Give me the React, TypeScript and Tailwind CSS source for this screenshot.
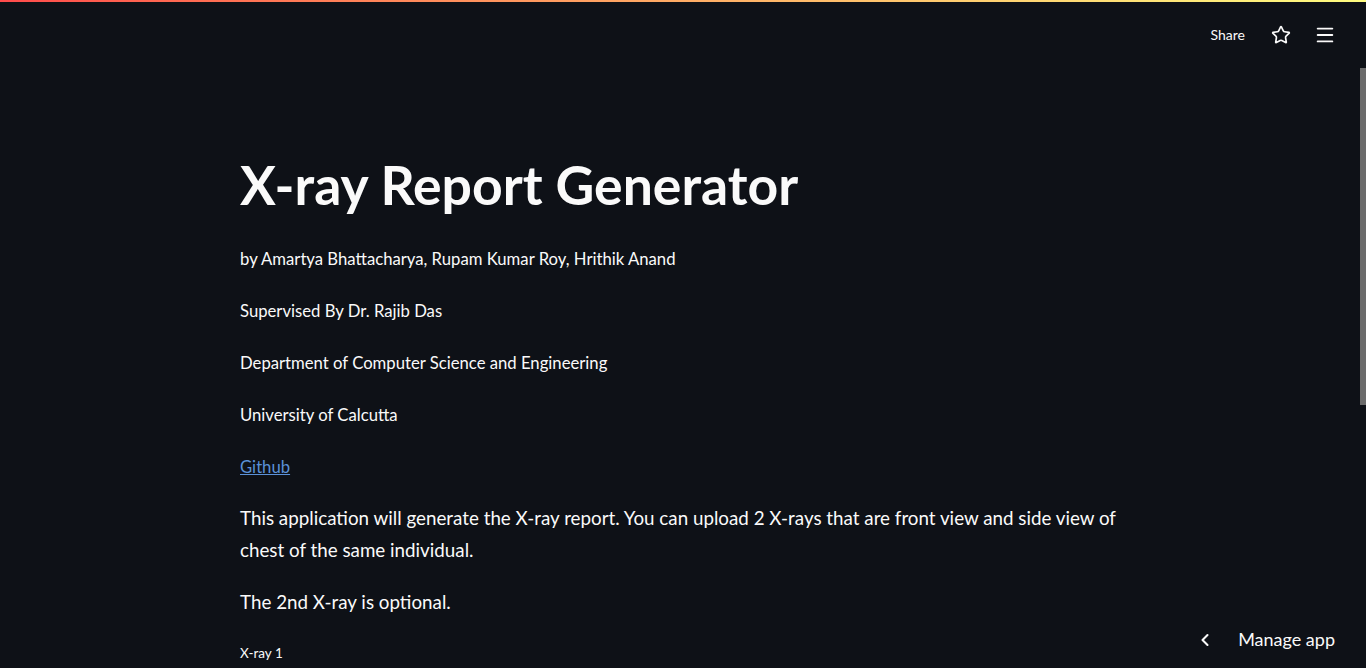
import React from 'react';
import { Star, Menu, ChevronLeft } from 'lucide-react';

const font = { fontFamily: 'Lato, "Noto Sans", sans-serif' };

const App: React.FC = () => {
  return (
    <div className="h-[668px] w-full overflow-hidden bg-[#0e1117] text-[#fafafa] flex flex-col" style={font}>
      {/* top decoration */}
      <div className="h-[2px] w-full bg-gradient-to-r from-[#ff4b4b] to-[#fffd80]" />

      {/* header */}
      <header className="h-[66px] flex items-center justify-end pr-[30px] gap-[22px]">
        <button className="text-[14px] leading-[20px] text-[#fafafa] mr-[4px] -mt-px">Share</button>
        <Star size={20} strokeWidth={2} className="text-[#fafafa]" />
        <Menu size={22} strokeWidth={2} className="text-[#fafafa] ml-[1px]" />
      </header>

      <div className="flex flex-1 min-h-0">
        <main className="flex-1">
          <div className="w-[880px] mx-auto pt-[84px]">
            <h1 className="text-[53.5px] leading-[64px] font-bold mb-[30px]">X-ray Report Generator</h1>

            <p className="text-[16.7px] leading-[26px] mb-[26px]">by Amartya Bhattacharya, Rupam Kumar Roy, Hrithik Anand</p>
            <p className="text-[16.7px] leading-[26px] mb-[26px]">Supervised By Dr. Rajib Das</p>
            <p className="text-[16.7px] leading-[26px] mb-[26px]">Department of Computer Science and Engineering</p>
            <p className="text-[16.7px] leading-[26px] mb-[26px]">University of Calcutta</p>
            <p className="text-[16.7px] leading-[26px] mb-[22px]">
              <a href="#" className="text-[#5b91d8] underline">Github</a>
            </p>

            <p className="text-[18.8px] leading-[32px] mb-[20px]">
              This application will generate the X-ray report. You can upload 2 X-rays that are front view and side view of chest of the same individual.
            </p>
            <p className="text-[18.8px] leading-[32px] mb-[25px]">The 2nd X-ray is optional.</p>

            <label className="block text-[13.5px] leading-[20px]">X-ray 1</label>
          </div>
        </main>

        {/* scrollbar */}
        <div className="w-[6px] flex flex-col">
          <div className="h-[337px] bg-[#6b6b6b]" />
        </div>
      </div>

      {/* manage app overlay */}
      <div className="absolute right-[31px] bottom-[15px] flex items-center gap-[23px] text-[#fafafa]">
        <ChevronLeft size={20} strokeWidth={2.5} />
        <span className="text-[18px]">Manage app</span>
      </div>
    </div>
  );
};

export default App;
